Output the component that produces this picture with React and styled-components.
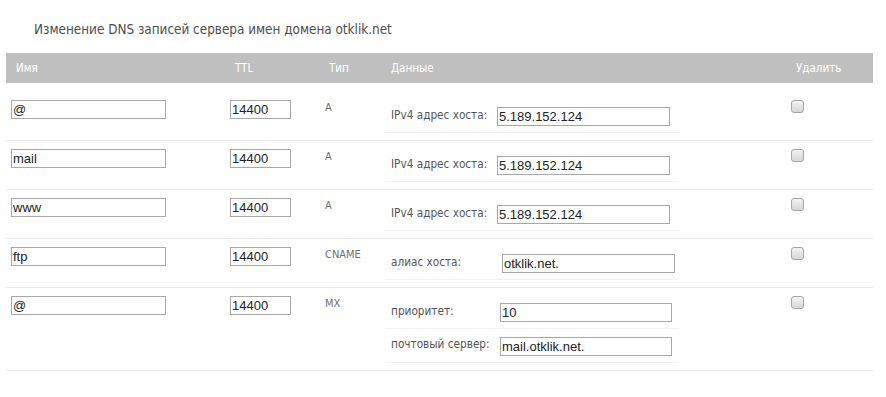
import React from 'react';
import styled, { createGlobalStyle } from 'styled-components';

const GlobalStyle = createGlobalStyle`
    html, body {
        margin: 0;
        padding: 0;
        background: #fff;
    }
    body {
        font-family: "DejaVu Sans Condensed", "DejaVu Sans", sans-serif;
    }
`;

const Page = styled.div`
    width: 886px;
    height: 397px;
    padding: 0 0 0 6px;
    box-sizing: border-box;
    overflow: hidden;
`;

const Title = styled.h1`
    margin: 0;
    padding: 22px 0 0 28px;
    height: 53px;
    box-sizing: border-box;
    font-size: 13.4px;
    font-weight: normal;
    color: #4d4d4d;
`;

const Table = styled.div`
    width: 867px;
`;

const cols = '219px 94px 62px 405px 87px';

const HeadRow = styled.div`
    display: grid;
    grid-template-columns: ${cols};
    height: 30px;
    align-items: center;
    background: #bfbfbf;
`;

const HeadCell = styled.div`
    padding-left: 10px;
    font-size: 11.5px;
    color: #fff;
`;

const Row = styled.div`
    display: grid;
    grid-template-columns: ${cols};
    padding: ${p => (p.$first ? '17px' : '8px')} 0 7px;
    border-bottom: 1px solid #ebebeb;
`;

const Cell = styled.div`
    padding-left: ${p => p.$pad ?? 5}px;
`;

const TextInput = styled.input`
    display: block;
    box-sizing: border-box;
    width: ${p => p.$w}px;
    height: 19px;
    margin: 0;
    padding: 0 1px;
    border: 1px solid #a8a8a8;
    font-family: "Liberation Sans", Arial, sans-serif;
    font-size: 13px;
    color: #222;
    outline: 0;
    background: #fff;
`;

const TypeText = styled.div`
    font-size: 11px;
    color: #6e6e6e;
    padding-top: 1px;
`;

const DataTable = styled.div`
    width: 294px;
    margin-left: 4px;
`;

const DataRow = styled.div`
    display: grid;
    grid-template-columns: ${p => p.$label}px 1fr;
    align-items: center;
    height: ${p => p.$h || 33}px;
    border-bottom: 1px solid #f1f1f1;
    box-sizing: border-box;
    padding-top: 1px;
`;

const Label = styled.span`
    padding-left: 6px;
    font-size: 11.7px;
    color: #555;
    margin-top: -4px;
`;

const Check = styled.input.attrs({ type: 'checkbox' })`
    appearance: none;
    -webkit-appearance: none;
    display: block;
    width: 13px;
    height: 13px;
    margin: 0;
    border: 1px solid #a6a6a6;
    border-radius: 3px;
    background: linear-gradient(#f2f2f2, #d6d6d6);
    box-sizing: border-box;
`;

const records = [
    { name: '@', type: 'A', data: [{ label: 'IPv4 адрес хоста:', value: '5.189.152.124' }], lw: 112, iw: 173 },
    { name: 'mail', type: 'A', data: [{ label: 'IPv4 адрес хоста:', value: '5.189.152.124' }], lw: 112, iw: 173 },
    { name: 'www', type: 'A', data: [{ label: 'IPv4 адрес хоста:', value: '5.189.152.124' }], lw: 112, iw: 173 },
    { name: 'ftp', type: 'CNAME', data: [{ label: 'алиас хоста:', value: 'otklik.net.' }], lw: 117, iw: 173 },
    {
        name: '@', type: 'MX',
        data: [
            { label: 'приоритет:', value: '10' },
            { label: 'почтовый сервер:', value: 'mail.otklik.net.' },
        ],
        lw: 115, iw: 172,
    },
];

export default function App() {
    return (
        <Page>
            <GlobalStyle />
            <Title>Изменение DNS записей сервера имен домена otklik.net</Title>
            <Table>
                <HeadRow>
                    <HeadCell>Имя</HeadCell>
                    <HeadCell>TTL</HeadCell>
                    <HeadCell>Тип</HeadCell>
                    <HeadCell>Данные</HeadCell>
                    <HeadCell>Удалить</HeadCell>
                </HeadRow>
                {records.map((r, i) => (
                    <Row key={i} $first={i === 0}>
                        <Cell>
                            <TextInput $w={155} defaultValue={r.name} />
                        </Cell>
                        <Cell>
                            <TextInput $w={61} defaultValue="14400" />
                        </Cell>
                        <Cell $pad={6}>
                            <TypeText>{r.type}</TypeText>
                        </Cell>
                        <Cell $pad={0}>
                            <DataTable>
                                {r.data.map((d, j) => (
                                    <DataRow key={j} $label={r.lw} $h={j > 0 ? 34 : 33}>
                                        <Label>{d.label}</Label>
                                        <TextInput $w={r.iw} defaultValue={d.value} />
                                    </DataRow>
                                ))}
                            </DataTable>
                        </Cell>
                        <Cell>
                            <Check />
                        </Cell>
                    </Row>
                ))}
            </Table>
        </Page>
    );
}
